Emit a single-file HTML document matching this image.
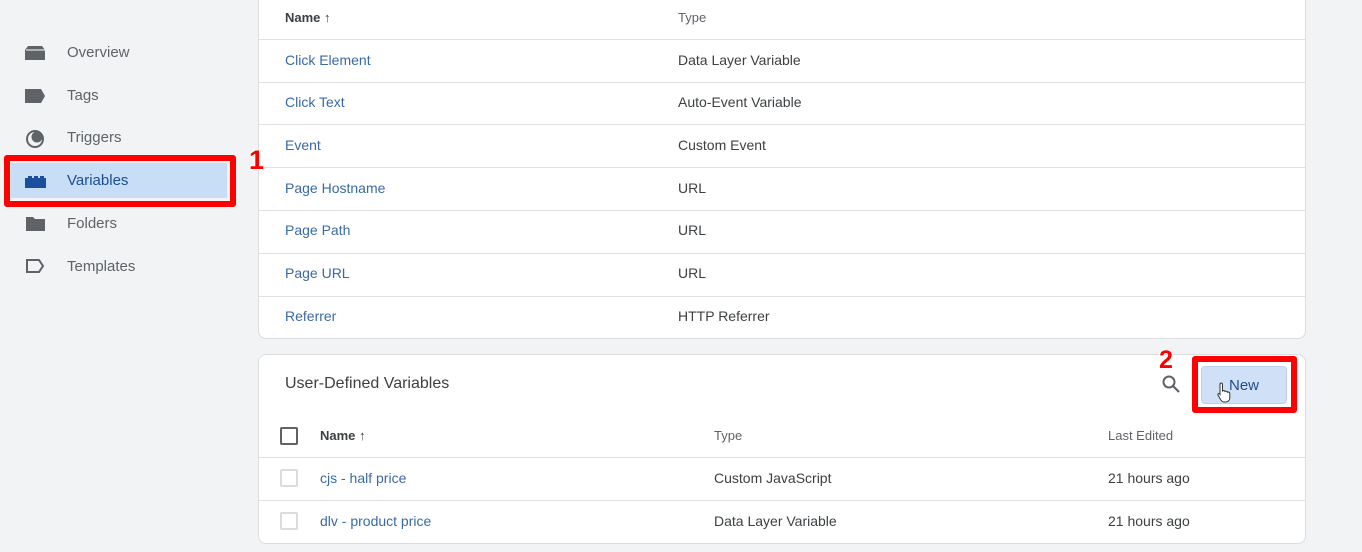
<!DOCTYPE html>
<html><head><meta charset="utf-8"><style>
*{box-sizing:border-box;margin:0;padding:0}
body{width:1362px;height:552px;background:#f1f3f4;font-family:"Liberation Sans",Arial,sans-serif;position:relative;overflow:hidden;font-size:14px;color:#3c4043}
.a{position:absolute}
.nav{left:67px;font-size:15px;color:#5f6368;line-height:20px}
.ic{left:25px}
.card{background:#fff;border:1px solid #dadce0;border-radius:8px}
.hl{position:absolute;left:0;right:0;height:1px;background:#e0e0e0}
.lnk{color:#3a6aa3}
.t{line-height:18px}
.hd{font-weight:bold;font-size:13px;color:#3c4043}
.cb{width:18px;height:18px;border:2px solid #dadce0;border-radius:2px;background:#fff}
</style></head><body>
<!-- sidebar -->
<div class="a" style="left:11px;top:163px;width:216px;height:35px;background:#c8ddf6"></div>
<div class="a" style="left:4px;top:155px;width:232px;height:52px;border:6px solid #f00;border-radius:3px"></div>
<svg class="a ic" style="top:45px" width="22" height="16"><path d="M3 1h14l3 4v10H0V5z" fill="#5f6368"/><path d="M1 5h19" stroke="#fff" stroke-width="1"/></svg>
<div class="a nav" style="top:43px">Overview</div>
<svg class="a ic" style="top:89px" width="22" height="14"><path d="M0 0h16l4 7-4 7H0z" fill="#5f6368"/></svg>
<div class="a nav" style="top:86px">Tags</div>
<svg class="a ic" style="top:129px" width="22" height="20"><circle cx="10" cy="10" r="8" fill="none" stroke="#5f6368" stroke-width="2"/><circle cx="12" cy="8" r="5.5" fill="#5f6368"/></svg>
<div class="a nav" style="top:128px">Triggers</div>
<svg class="a ic" style="top:175px" width="22" height="14"><path d="M0 3h3V1h4v2h2V1h4v2h2V1h4v2h2v10H0z" fill="#1a4fa0"/></svg>
<div class="a nav" style="top:171px;color:#1f4e8c">Variables</div>
<svg class="a ic" style="top:216px" width="22" height="16"><path d="M1 1h7l2 2h10v12H1z" fill="#5f6368"/></svg>
<div class="a nav" style="top:214px">Folders</div>
<svg class="a ic" style="top:259px" width="22" height="14"><path d="M2 1h12l4 6-4 6H2z" fill="none" stroke="#5f6368" stroke-width="2"/></svg>
<div class="a nav" style="top:257px">Templates</div>

<!-- card 1 -->
<div class="a card" style="left:258px;top:-10px;width:1048px;height:349px">
<div class="hl" style="top:48px"></div><div class="hl" style="top:91px"></div><div class="hl" style="top:133px"></div><div class="hl" style="top:176px"></div><div class="hl" style="top:219px"></div><div class="hl" style="top:262px"></div><div class="hl" style="top:305px"></div>
</div>
<div class="a" style="left:249px;top:145px;width:22px;height:30px;font-size:27px;font-weight:bold;color:#f00;line-height:30px;text-shadow:-1px 0 #fff,1px 0 #fff,0 1px #fff,0 -1px #fff,1px 1px #ddd">1</div>
<div class="a t hd" style="left:285px;top:9px">Name <span style="font-weight:normal">↑</span></div>
<div class="a t" style="left:678px;top:9px;font-size:13px;color:#5f6368">Type</div>
<div class="a t lnk" style="left:285px;top:51px">Click Element</div><div class="a t" style="left:678px;top:51px">Data Layer Variable</div>
<div class="a t lnk" style="left:285px;top:93px">Click Text</div><div class="a t" style="left:678px;top:93px">Auto-Event Variable</div>
<div class="a t lnk" style="left:285px;top:136px">Event</div><div class="a t" style="left:678px;top:136px">Custom Event</div>
<div class="a t lnk" style="left:285px;top:179px">Page Hostname</div><div class="a t" style="left:678px;top:179px">URL</div>
<div class="a t lnk" style="left:285px;top:221px">Page Path</div><div class="a t" style="left:678px;top:221px">URL</div>
<div class="a t lnk" style="left:285px;top:264px">Page URL</div><div class="a t" style="left:678px;top:264px">URL</div>
<div class="a t lnk" style="left:285px;top:307px">Referrer</div><div class="a t" style="left:678px;top:307px">HTTP Referrer</div>

<!-- card 2 -->
<div class="a card" style="left:258px;top:354px;width:1048px;height:190px">
<div class="hl" style="top:102px"></div><div class="hl" style="top:145px"></div>
</div>
<div class="a" style="left:285px;top:374px;font-size:16px;line-height:20px;color:#3c4043">User-Defined Variables</div>
<svg class="a" style="left:1161px;top:374px" width="22" height="22"><circle cx="8" cy="8" r="5.5" fill="none" stroke="#5f6368" stroke-width="2"/><path d="M12 12l6 6" stroke="#5f6368" stroke-width="2.2"/></svg>
<div class="a" style="left:1201px;top:366px;width:86px;height:38px;background:#cfe0f7;border-radius:4px;border:1px solid #bcd0ea"></div>
<div class="a" style="left:1192px;top:356px;width:105px;height:57px;border:6px solid #f00;border-radius:3px"></div>
<div class="a" style="left:1229px;top:377px;font-size:15px;color:#1f4e8c;line-height:18px">New</div>
<svg class="a" style="left:1216px;top:381px" width="16" height="22"><path d="M5 2c1 0 1.5.5 1.5 1.5V10l1-.5c.8 0 1.5.4 1.5 1l1-.3c.8 0 1.4.4 1.4 1l.9-.2c1 0 1.5.6 1.5 1.5V17c0 2-1.5 4-4 4H8c-1.5 0-2.5-1-3.5-2.5L2 14c-.5-1 .5-2 1.5-1.2l.5.7V3.5C4 2.5 4.3 2 5 2z" fill="#fff" stroke="#333" stroke-width="1"/></svg>
<div class="a" style="left:1159px;top:346px;font-size:25px;font-weight:bold;color:#f00;line-height:28px;text-shadow:-1px 0 #fff,1px 0 #fff,0 1px #fff,0 -1px #fff">2</div>

<div class="a cb" style="left:280px;top:427px;border-color:#5f6368"></div>
<div class="a t hd" style="left:320px;top:427px">Name <span style="font-weight:normal">↑</span></div>
<div class="a t" style="left:714px;top:427px;font-size:13px;color:#5f6368">Type</div>
<div class="a t" style="left:1108px;top:427px;font-size:13px;color:#5f6368">Last Edited</div>
<div class="a cb" style="left:280px;top:469px"></div>
<div class="a t lnk" style="left:320px;top:469px">cjs - half price</div><div class="a t" style="left:714px;top:469px">Custom JavaScript</div><div class="a t" style="left:1108px;top:469px">21 hours ago</div>
<div class="a cb" style="left:280px;top:512px"></div>
<div class="a t lnk" style="left:320px;top:512px">dlv - product price</div><div class="a t" style="left:714px;top:512px">Data Layer Variable</div><div class="a t" style="left:1108px;top:512px">21 hours ago</div>
</body></html>
